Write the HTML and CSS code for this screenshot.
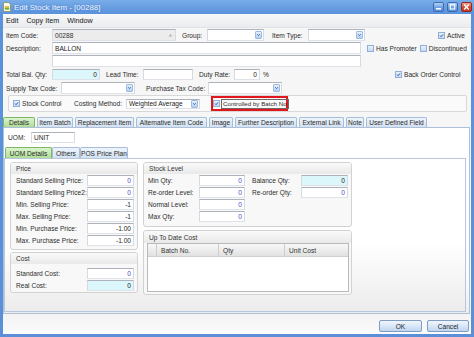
FILE: index.html
```html
<!DOCTYPE html>
<html lang="en">
<head>
  <meta charset="UTF-8">
  <title>Edit Stock Item - [00288]</title>
  <link rel="stylesheet" href="styles.css">
</head>
<body>
<div class="window">
  <div class="titlebar">
    <svg class="app-icon" viewBox="0 0 8 10"><path d="M0.5 0.5 H5.5 L7.5 2.5 V9.5 H0.5 Z" fill="#fdfbe8" stroke="#8a8a60" stroke-width="0.8"/><rect x="1.8" y="4" width="4.4" height="3.5" fill="#e2c34a"/><rect x="1.8" y="5.8" width="4.4" height="1.7" fill="#6fae3d"/></svg>
    <span class="title">Edit Stock Item - [00288]</span>
    <div class="win-btns">
      <span class="wbtn"><svg viewBox="0 0 9 8"><rect x="2" y="5" width="5" height="1.5" fill="#fff"/></svg></span>
      <span class="wbtn"><svg viewBox="0 0 9 8"><rect x="2.3" y="1.8" width="4.4" height="4.2" fill="none" stroke="#fff" stroke-width="1.1"/></svg></span>
      <span class="wbtn close"><svg viewBox="0 0 9 8"><path d="M2.2 1.5 L6.8 6.5 M6.8 1.5 L2.2 6.5" stroke="#fff" stroke-width="1.4"/></svg></span>
    </div>
  </div>

  <div class="client">
    <div class="menubar">
      <span>Edit</span>
      <span>Copy Item</span>
      <span>Window</span>
    </div>

    <div class="form">
      <div class="row r1">
        <span class="lbl w46">Item Code:</span>
        <div class="field txt locked w124">00288<span class="spin"><svg viewBox="0 0 5 4"><path d="M0.5 3.5 L2.5 0.8 L4.5 3.5 Z" fill="#b8b8b8"/></svg></span></div>
        <span class="lbl w25 ml6">Group:</span>
        <div class="field sel w57"><span class="drop"><svg viewBox="0 0 7 8"><path d="M1.8 3 L3.5 4.8 L5.2 3" fill="none" stroke="#2b4f85" stroke-width="1.2"/></svg></span></div>
        <span class="lbl w36 ml8">Item Type:</span>
        <div class="field sel w57"><span class="drop"><svg viewBox="0 0 7 8"><path d="M1.8 3 L3.5 4.8 L5.2 3" fill="none" stroke="#2b4f85" stroke-width="1.2"/></svg></span></div>
        <label class="check ml73"><span class="cb on"><svg viewBox="0 0 7 7"><path d="M1.4 3.6 L2.9 5.1 L5.7 1.9" fill="none" stroke="#1f4c96" stroke-width="1.3"/></svg></span>Active</label>
      </div>

      <div class="row r2">
        <span class="lbl w46">Description:</span>
        <div class="field txt w309">BALLON</div>
        <label class="check ml6"><span class="cb"></span>Has Promoter</label>
        <label class="check ml3"><span class="cb"></span>Discontinued</label>
      </div>

      <div class="row r3">
        <span class="lbl w46"></span>
        <div class="field txt w309"></div>
      </div>

      <div class="row r4">
        <span class="lbl w46">Total Bal. Qty:</span>
        <div class="field cyan w48">0</div>
        <span class="lbl w37 ml6">Lead Time:</span>
        <div class="field w50"></div>
        <span class="lbl w35 ml6">Duty Rate:</span>
        <div class="field w26">0</div>
        <span class="lbl w8 ml3">%</span>
        <label class="check ml124"><span class="cb on"><svg viewBox="0 0 7 7"><path d="M1.4 3.6 L2.9 5.1 L5.7 1.9" fill="none" stroke="#1f4c96" stroke-width="1.3"/></svg></span>Back Order Control</label>
      </div>

      <div class="row r5">
        <span class="lbl w55">Supply Tax Code:</span>
        <div class="field sel w74"><span class="drop"><svg viewBox="0 0 7 8"><path d="M1.8 3 L3.5 4.8 L5.2 3" fill="none" stroke="#2b4f85" stroke-width="1.2"/></svg></span></div>
        <span class="lbl w62 ml11">Purchase Tax Code:</span>
        <div class="field sel w74"><span class="drop"><svg viewBox="0 0 7 8"><path d="M1.8 3 L3.5 4.8 L5.2 3" fill="none" stroke="#2b4f85" stroke-width="1.2"/></svg></span></div>
      </div>

      <div class="option-bar">
        <label class="check w61"><span class="cb on"><svg viewBox="0 0 7 7"><path d="M1.4 3.6 L2.9 5.1 L5.7 1.9" fill="none" stroke="#1f4c96" stroke-width="1.3"/></svg></span>Stock Control</label>
        <span class="lbl w52">Costing Method:</span>
        <div class="field sel txt w74 h10">Weighted Average<span class="drop"><svg viewBox="0 0 7 8"><path d="M1.8 3 L3.5 4.8 L5.2 3" fill="none" stroke="#2b4f85" stroke-width="1.2"/></svg></span></div>
        <div class="highlight">
          <span class="cb on"><svg viewBox="0 0 7 7"><path d="M1.4 3.6 L2.9 5.1 L5.7 1.9" fill="none" stroke="#1f4c96" stroke-width="1.3"/></svg></span>
          <span class="focus-text">Controlled by Batch No</span>
        </div>
      </div>
    </div>

    <div class="tabs">
      <span class="tab active w32">Details</span>
      <span class="tab w36">Item Batch</span>
      <span class="tab w59">Replacement Item</span>
      <span class="tab w71">Alternative Item Code</span>
      <span class="tab w24">Image</span>
      <span class="tab w62">Further Description</span>
      <span class="tab w45">External Link</span>
      <span class="tab w18">Note</span>
      <span class="tab w61">User Defined Field</span>
    </div>

    <div class="tab-panel">
      <div class="uom-row">
        <span class="lbl w23">UOM:</span>
        <div class="field txt w44">UNIT</div>
      </div>

      <div class="subtabs">
        <span class="tab active w47">UOM Details</span>
        <span class="tab w28">Others</span>
        <span class="tab w48">POS Price Plan</span>
      </div>

      <div class="sub-panel">
        <div class="col left-col">
          <div class="group price-box">
            <div class="group-head">Price</div>
            <div class="grow"><span class="lbl w71">Standard Selling Price:</span><div class="field blue w47">0</div></div>
            <div class="grow"><span class="lbl w71">Standard Selling Price2:</span><div class="field blue w47">0</div></div>
            <div class="grow"><span class="lbl w71">Min. Selling Price:</span><div class="field w47">-1</div></div>
            <div class="grow"><span class="lbl w71">Max. Selling Price:</span><div class="field w47">-1</div></div>
            <div class="grow"><span class="lbl w71">Min. Purchase Price:</span><div class="field w47">-1.00</div></div>
            <div class="grow"><span class="lbl w71">Max. Purchase Price:</span><div class="field w47">-1.00</div></div>
          </div>
          <div class="group cost-box">
            <div class="group-head">Cost</div>
            <div class="grow"><span class="lbl w71">Standard Cost:</span><div class="field blue w47">0</div></div>
            <div class="grow"><span class="lbl w71">Real Cost:</span><div class="field cyan w47">0</div></div>
          </div>
        </div>

        <div class="col right-col">
          <div class="group stock-box">
            <div class="group-head">Stock Level</div>
            <div class="grow stock"><span class="lbl w51">Min Qty:</span><div class="field blue w46">0</div><span class="lbl w49 ml7">Balance Qty:</span><div class="field cyan w47">0</div></div>
            <div class="grow stock"><span class="lbl w51">Re-order Level:</span><div class="field blue w46">0</div><span class="lbl w49 ml7">Re-order Qty:</span><div class="field blue w47">0</div></div>
            <div class="grow stock"><span class="lbl w51">Normal Level:</span><div class="field blue w46">0</div></div>
            <div class="grow stock"><span class="lbl w51">Max Qty:</span><div class="field blue w46">0</div></div>
          </div>
          <div class="group cost-table-box">
            <div class="group-head tall">Up To Date Cost</div>
            <div class="grid">
              <div class="grid-head">
                <span class="gc c0"></span>
                <span class="gc c1">Batch No.</span>
                <span class="gc c2">Qty</span>
                <span class="gc c3">Unit Cost</span>
              </div>
            </div>
          </div>
        </div>
      </div>
    </div>

    <div class="footer">
      <button class="btn w43">OK</button>
      <button class="btn w42">Cancel</button>
    </div>
  </div>
</div>
</body>
</html>
```

FILE: styles.css
```css
* {
  box-sizing: border-box;
}
body {
  margin: 0;
  font-family: "Liberation Sans", Arial, sans-serif;
  font-size: 6.6px;
  color: #2c2c2c;
  background: #fff;
}
.window {
  width: 474px;
  height: 337px;
  display: flex;
  flex-direction: column;
  background: linear-gradient(#78ade9, #5a92dc 14px, #5b90d9);
}
.titlebar {
  height: 14px;
  flex: none;
  display: flex;
  align-items: center;
  padding-left: 3px;
}
.app-icon {
  width: 8px;
  height: 10px;
}
.title {
  margin-left: 3px;
  font-size: 7.9px;
  color: #f2f7ff;
  text-shadow: 0 0 2px #3d70b8;
}
.win-btns {
  margin-left: auto;
  margin-right: 2px;
  display: flex;
  gap: 3px;
}
.wbtn {
  width: 11px;
  height: 10px;
  border: 1px solid #3c6bb0;
  border-radius: 2px;
  background: linear-gradient(#b6d4f7, #6c9fe0 55%, #5b8fd6);
  display: flex;
  align-items: center;
  justify-content: center;
}
.wbtn svg {
  width: 9px;
  height: 8px;
}
.wbtn.close {
  border-color: #8e2a1d;
  background: linear-gradient(#f3a493, #d8442c 55%, #c7361f);
}
.client {
  flex: 1;
  margin: 0 3px 3px;
  background: #f6f6f6;
  display: flex;
  flex-direction: column;
}
.menubar {
  height: 14px;
  flex: none;
  display: flex;
  align-items: center;
  gap: 8px;
  padding-left: 3px;
  font-size: 7.2px;
  color: #151515;
  background: linear-gradient(#f8f8f8, #eaecef);
  border-bottom: 1px solid #e0e3e8;
}

/* header form */
.form {
  padding: 1px 0 0 3px;
}
.row {
  display: flex;
  align-items: center;
  height: 12px;
}
.r2, .r3 {
  margin-top: 1px;
}
.r4 {
  margin-top: 2px;
  height: 11px;
}
.r5 {
  margin-top: 2px;
}
.lbl {
  flex: none;
  white-space: nowrap;
}
.field {
  flex: none;
  height: 100%;
  display: flex;
  align-items: center;
  justify-content: flex-end;
  padding: 0 2px;
  background: #fff;
  border: 1px solid;
  border-color: #aeb3bb #d6dbe2 #dfe3e9 #d6dbe2;
  color: #222;
  white-space: nowrap;
  overflow: hidden;
}
.field.txt {
  justify-content: flex-start;
}
.field.sel {
  padding-right: 1px;
}
.field.sel.txt .drop {
  margin-left: auto;
}
.field.locked {
  background: #ececec;
  color: #333;
}
.field.cyan {
  background: #dcf7fb;
}
.field.blue {
  color: #4b4bc4;
}
.field.h10 {
  height: 10px;
}
.spin {
  margin-left: auto;
  width: 5px;
  height: 4px;
  display: flex;
}
.spin svg, .drop svg {
  width: 100%;
  height: 100%;
}
.drop {
  width: 7px;
  height: 8px;
  border: 1px solid #9dbbe2;
  border-radius: 1px;
  background: linear-gradient(#e4effc, #b5cff0);
  display: flex;
}
.check {
  flex: none;
  display: flex;
  align-items: center;
  white-space: nowrap;
}
.cb {
  width: 7px;
  height: 7px;
  margin-right: 2px;
  border: 1px solid #8fb0da;
  background: linear-gradient(#eaf2fd, #c5daf4);
  display: flex;
  flex: none;
}
.cb svg {
  width: 100%;
  height: 100%;
}

/* widths and gaps */
.w8 { width: 8px; }
.w18 { width: 18px; }
.w23 { width: 23px; }
.w24 { width: 24px; }
.w25 { width: 25px; }
.w26 { width: 26px; }
.w28 { width: 28px; }
.w32 { width: 32px; }
.w35 { width: 35px; }
.w36 { width: 36px; }
.w37 { width: 37px; }
.w42 { width: 42px; }
.w43 { width: 43px; }
.w44 { width: 44px; }
.w45 { width: 45px; }
.w46 { width: 46px; }
.w47 { width: 47px; }
.w48 { width: 48px; }
.w49 { width: 49px; }
.w50 { width: 50px; }
.w51 { width: 51px; }
.w52 { width: 52px; }
.w55 { width: 55px; }
.w57 { width: 57px; }
.w59 { width: 59px; }
.w61 { width: 61px; }
.w62 { width: 62px; }
.w71 { width: 71px; }
.w74 { width: 74px; }
.w124 { width: 124px; }
.w309 { width: 309px; }
.ml3 { margin-left: 3px; }
.ml4 { margin-left: 4px; }
.ml6 { margin-left: 6px; }
.ml7 { margin-left: 7px; }
.ml8 { margin-left: 8px; }
.ml11 { margin-left: 11px; }
.ml73 { margin-left: 73px; }
.ml124 { margin-left: 124px; }

.option-bar {
  margin: 1px 0 0 2px;
  width: 459px;
  height: 17px;
  display: flex;
  align-items: center;
  padding-left: 4px;
  border: 1px solid #d8d8d8;
  border-radius: 2px;
  background: #fafafa;
}
.highlight {
  margin-left: 11px;
  width: 77px;
  height: 15px;
  display: flex;
  align-items: center;
  border: 2px solid #e2171c;
}
.highlight .cb {
  margin-right: 1px;
}
.focus-text {
  font-size: 6.2px;
  padding: 0 1px;
  border: 1px solid #6a6a6a;
  line-height: 8px;
  white-space: nowrap;
}

/* tabs */
.tabs, .subtabs {
  display: flex;
  align-items: flex-end;
  flex: none;
}
.tabs {
  margin-top: 5px;
  height: 10px;
  gap: 2px;
}
.tab {
  height: 100%;
  display: flex;
  align-items: center;
  justify-content: center;
  white-space: nowrap;
  color: #2a2a2a;
  border: 1px solid #a7bdd9;
  border-bottom: none;
  border-radius: 2px 2px 0 0;
  background: linear-gradient(#eef4fb, #d2e1f2);
}
.tab.active {
  border-color: #7db764;
  background: linear-gradient(#dcf4cf, #aedd96);
}
.tab-panel {
  width: 467px;
  height: 187px;
  flex: none;
  padding-top: 4px;
  border: 1px solid #adc0d8;
  background: linear-gradient(#ffffff, #fbfbfb 80%, #eeeeee);
}
.uom-row {
  height: 11px;
  display: flex;
  align-items: center;
  padding-left: 4px;
}
.subtabs {
  margin: 4px 0 0 1px;
  height: 11px;
}
.sub-panel {
  width: 462px;
  height: 154px;
  display: flex;
  gap: 5px;
  padding: 3px 0 0 5px;
  border: 1px solid #b8c8dc;
  background: linear-gradient(#ffffff, #ffffff 55%, #ececec);
}
.left-col {
  width: 128px;
}
.right-col {
  width: 209px;
}
.group {
  border: 1px solid #d2d2d2;
  border-radius: 3px;
  background: #f8f8f8;
  overflow: hidden;
}
.group-head {
  height: 11px;
  display: flex;
  align-items: center;
  padding-left: 5px;
  color: #333;
  background: linear-gradient(#fafafa, #e9e9e9);
}
.group-head.tall {
  height: 12px;
}
.price-box {
  height: 88px;
}
.cost-box {
  margin-top: 2px;
  height: 41px;
}
.cost-box .group-head {
  margin-bottom: 3px;
}
.stock-box {
  height: 65px;
}
.cost-table-box {
  margin-top: 3px;
  height: 65px;
}
.grow {
  height: 12px;
  display: flex;
  align-items: center;
  padding-left: 5px;
}
.grow .field {
  height: 11px;
}
.grow.stock {
  padding-left: 4px;
}
.grid {
  margin-left: 3px;
  width: 202px;
  height: 49px;
  border: 1px solid #b9b9b9;
  background: #fff;
}
.grid-head {
  height: 13px;
  display: flex;
  background: linear-gradient(#f8f8f8, #e1e1e1);
  border-bottom: 1px solid #cfcfcf;
}
.gc {
  display: flex;
  align-items: center;
  padding-left: 4px;
  border-right: 1px solid #cdcdcd;
  color: #333;
}
.c0 { width: 9px; }
.c1 { width: 62px; }
.c2 { width: 66px; }
.c3 { flex: 1; border-right: none; }

.footer {
  flex: 1;
  display: flex;
  justify-content: flex-end;
  align-items: flex-start;
  gap: 5px;
  padding: 6px 2px 0 0;
  background: linear-gradient(#f3f3f3, #fbfbfb);
}
.btn {
  height: 12px;
  padding: 0;
  font-family: inherit;
  font-size: 6.6px;
  color: #1e1e1e;
  border: 1px solid #7f9dc2;
  border-radius: 2px;
  background: linear-gradient(#f0f6fd, #d9e7f8 50%, #bfd5f0);
}
```
